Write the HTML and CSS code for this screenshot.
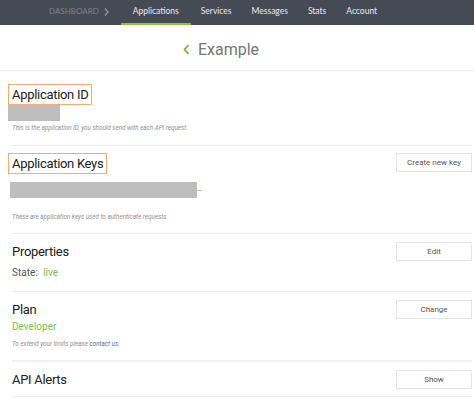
FILE: index.html
```html
<!DOCTYPE html>
<html lang="en">
<head>
    <meta charset="UTF-8">
    <meta name="viewport" content="width=device-width, initial-scale=1.0">
    <title>Example - Applications</title>
    <link rel="stylesheet" href="styles.css">
</head>
<body>
    <nav class="topbar">
        <span class="crumb">DASHBOARD</span>
        <svg class="crumb-arrow" width="5" height="8" viewBox="0 0 5 8">
            <polyline points="1,0.5 4,4 1,7.5" fill="none" stroke="#9a9ea6" stroke-width="1.2"/>
        </svg>
        <a class="tab active" href="#">Applications</a>
        <a class="tab" href="#">Services</a>
        <a class="tab" href="#">Messages</a>
        <a class="tab" href="#">Stats</a>
        <a class="tab" href="#">Account</a>
    </nav>

    <header class="page-title">
        <svg class="back" width="7" height="11" viewBox="0 0 7 11">
            <polyline points="5.5,1 1.5,5.5 5.5,10" fill="none" stroke="#7cb342" stroke-width="1.8"/>
        </svg>
        <h1>Example</h1>
    </header>

    <main class="content">
        <section class="block block-id">
            <div class="block-main">
                <h2 class="block-title marked">Application ID</h2>
                <div class="redacted redacted-id"></div>
                <p class="hint">This is the application ID, you should send with each API request.</p>
            </div>
        </section>

        <section class="block block-keys">
            <div class="block-main">
                <h2 class="block-title marked">Application Keys</h2>
                <div class="key-row">
                    <div class="redacted redacted-key"></div>
                    <span class="key-tick"></span>
                </div>
                <p class="hint">These are application keys used to authenticate requests.</p>
            </div>
            <button class="btn">Create new key</button>
        </section>

        <section class="block block-props">
            <div class="block-main">
                <h2 class="block-title">Properties</h2>
                <p class="state">State: <span class="green">live</span></p>
            </div>
            <button class="btn">Edit</button>
        </section>

        <section class="block block-plan">
            <div class="block-main">
                <h2 class="block-title">Plan</h2>
                <p class="plan-name green">Developer</p>
                <p class="hint hint-plan">To extend your limits please <a href="#">contact us</a>.</p>
            </div>
            <button class="btn">Change</button>
        </section>

        <section class="block block-alerts">
            <div class="block-main">
                <h2 class="block-title">API Alerts</h2>
            </div>
            <button class="btn">Show</button>
        </section>
    </main>
</body>
</html>
```

FILE: styles.css
```css
* {
    margin: 0;
    padding: 0;
    box-sizing: border-box;
}

body {
    font-family: Roboto, 'Liberation Sans', sans-serif;
    background: #ffffff;
    color: #222;
    overflow: hidden;
}

/* top navigation */
.topbar {
    height: 25px;
    background: #464a55;
    display: flex;
    align-items: flex-start;
    padding-left: 49px;
    font-family: Lato, 'Open Sans', sans-serif;
    font-size: 8.5px;
}

.crumb {
    line-height: 23px;
    color: #7c808a;
    font-size: 8px;
}

.crumb-arrow {
    margin: 8px 12px 0 5px;
}

.tab {
    line-height: 23px;
    padding: 0 10px;
    color: #e9eaee;
    text-decoration: none;
    border-bottom: 2px solid transparent;
}

.tab.active {
    padding: 0 12px;
    border-bottom-color: #8cc63f;
}

/* page title */
.page-title {
    height: 46px;
    border-bottom: 1px solid #ececec;
    display: flex;
    align-items: center;
    justify-content: center;
    gap: 8px;
    padding: 4px 32px 0 0;
}

.page-title h1 {
    font-size: 16px;
    font-weight: 400;
    color: #777;
}

/* content blocks */
.content {
    margin: 0 2px 0 12px;
}

.block {
    display: flex;
    justify-content: space-between;
    align-items: flex-start;
    border-bottom: 1px solid #ececec;
    padding-top: 8px;
}

.block-id {
    padding: 13px 0 12px;
}

.block-keys {
    padding: 7px 0 11px;
}

.block-props {
    padding-bottom: 11px;
}

.block-plan {
    padding-bottom: 11px;
    border-bottom: 2px solid #f1f1f1;
}

.block-alerts {
    padding-bottom: 6px;
}

.block-title {
    font-size: 13px;
    font-weight: 400;
    line-height: 20px;
    letter-spacing: -0.3px;
    color: #222;
}

.block-title.marked {
    display: inline-block;
    line-height: 19px;
    border: 1px solid #f1ac78;
    padding: 0 3px;
    margin-left: -4px;
}

.redacted {
    background: #bdbdbd;
}

.redacted-id {
    width: 52px;
    height: 16px;
    margin-left: -4px;
}

.key-row {
    display: flex;
    align-items: center;
    margin: 8px 0 0 -2px;
}

.redacted-key {
    width: 187px;
    height: 16px;
}

.key-tick {
    width: 5px;
    height: 1px;
    background: #b5cf7a;
}

.hint {
    font-size: 6.3px;
    font-style: italic;
    line-height: 10px;
    color: #8f8f8f;
    margin-top: 2px;
}

.block-keys .hint {
    margin-top: 14px;
}

.hint a {
    color: #4a6fa8;
    text-decoration: none;
}

.hint-plan {
    margin-top: 5px;
}

.state {
    font-size: 10px;
    line-height: 14px;
    color: #555;
    margin-top: 4px;
    word-spacing: 3px;
}

.green {
    color: #7cc04b;
}

.plan-name {
    font-size: 10px;
    line-height: 14px;
}

.btn {
    width: 76px;
    height: 19px;
    background: #fff;
    border: 1px solid #e4e4e4;
    font-family: Roboto, 'Liberation Sans', sans-serif;
    font-size: 8px;
    color: #555;
    flex-shrink: 0;
}
```
